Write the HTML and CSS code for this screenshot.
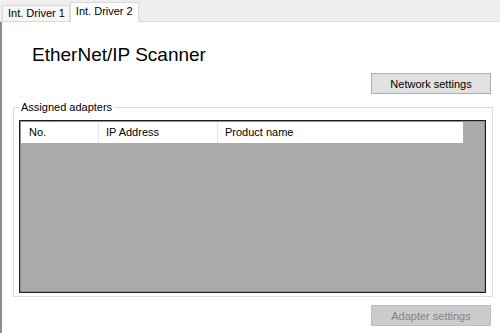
FILE: index.html
```html
<!DOCTYPE html>
<html>
<head>
<meta charset="utf-8">
<link rel="stylesheet" href="styles.css">
</head>
<body>
<div class="window">
  <div class="tabs">
    <div class="tab">Int. Driver 1</div>
    <div class="tab active">Int. Driver 2</div>
  </div>
  <div class="panel">
    <h1 class="title">EtherNet/IP Scanner</h1>
    <div class="btn-row">
      <button class="btn">Network settings</button>
    </div>
    <fieldset class="group">
      <legend class="group-label">Assigned adapters</legend>
      <div class="listview">
        <div class="lv-header">
          <div class="col col-no">No.</div>
          <div class="col col-ip">IP Address</div>
          <div class="col col-name">Product name</div>
        </div>
      </div>
    </fieldset>
    <div class="btn-row bottom">
      <button class="btn disabled">Adapter settings</button>
    </div>
  </div>
</div>
</body>
</html>
```

FILE: styles.css
```css
html, body {
  margin: 0;
  padding: 0;
  background: #ffffff;
}
body {
  font-family: "Liberation Sans", Arial, sans-serif;
  font-size: 11px;
  color: #000;
}
.window {
  width: 500px;
  height: 333px;
  display: flex;
  flex-direction: column;
  overflow: hidden;
}
.tabs {
  height: 21px;
  background: #eeeeee;
  border-bottom: 1px solid #dadada;
  display: flex;
  align-items: flex-end;
  padding-left: 2px;
  flex-shrink: 0;
}
.tab {
  line-height: 15px;
  padding: 0 4px 0 5px;
  border: 1px solid #d9d9d9;
  border-bottom: none;
  background: #f6f6f6;
  box-sizing: border-box;
  height: 16px;
  font-size: 11px;
}
.tab.active {
  background: #ffffff;
  height: 20px;
  line-height: 16px;
  margin-bottom: -1px;
  padding: 0 5px 0 5px;
  position: relative;
}
.panel {
  flex: 1;
  border-left: 2px solid #8e8e8e;
  display: flex;
  flex-direction: column;
}
.title {
  margin: 22px 0 0 30px;
  font-size: 19px;
  line-height: 22px;
  font-weight: normal;
}
.btn-row {
  display: flex;
  justify-content: flex-end;
  padding-right: 9px;
  margin-top: 7px;
}
.btn-row.bottom {
  margin-top: 8px;
}
.btn {
  width: 120px;
  height: 21px;
  box-sizing: border-box;
  background: #e1e1e1;
  border: 1px solid #adadad;
  font-family: "Liberation Sans", Arial, sans-serif;
  font-size: 11px;
  color: #000;
  padding: 0;
}
.btn.disabled {
  background: #cccccc;
  border-color: #bfbfbf;
  color: #838383;
}
.group {
  margin: 7px 7px 0 11px;
  padding: 6px 6px 3px 5px;
  border: 1px solid #dcdcdc;
  min-width: 0;
}
.group-label {
  padding: 0 2px;
  margin-left: 0;
  font-size: 11px;
  line-height: 13px;
}
.listview {
  height: 173px;
  box-sizing: border-box;
  border: 1px solid #1e1e1e;
  box-shadow: inset 0 0 0 1px #8f8f8f;
  background: #ababab;
  padding: 1px;
}
.lv-header {
  display: flex;
  height: 21px;
  width: 442px;
  background: #ffffff;
}
.col {
  box-sizing: border-box;
  border-right: 1px solid #e5e5e5;
  line-height: 20px;
  padding-left: 7px;
  white-space: nowrap;
}
.col-no { width: 78px; padding-left: 8px; }
.col-ip { width: 119px; }
.col-name { flex: 1; border-right: none; }
```
